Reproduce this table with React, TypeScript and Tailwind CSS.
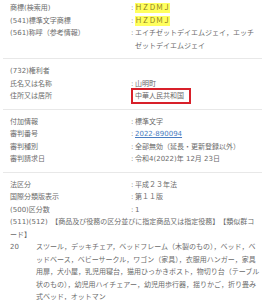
import React from 'react';

type Row = { label: string; value: React.ReactNode };

const Field: React.FC<Row> = ({ label, value }) => (
  <div className="grid grid-cols-[121px_4px_1fr]">
    <span>{label}</span>
    <span>{value !== null ? ':' : ''}</span>
    <span>{value}</span>
  </div>
);

const Mark: React.FC<{ children: React.ReactNode }> = ({ children }) => (
  <span className="bg-[#ffff5e] text-[#8a7a1e] py-[1px]">{children}</span>
);

const App: React.FC = () => {
  return (
    <div className="w-[265px] h-[300px] overflow-hidden bg-white px-[3px] pt-[2px] text-[7px] leading-[12.5px] text-[#6b6b6b] font-['DejaVu_Sans','Noto_Sans_CJK_JP',sans-serif]">
      {/* 商標 */}
      <div className="pl-[7px] pr-[2px] pb-[6px]">
        <Field label="商標(検索用)" value={<Mark>ＨＺＤＭＪ</Mark>} />
        <Field label="(541)標準文字商標" value={<Mark>ＨＺＤＭＪ</Mark>} />
        <Field label="(561)称呼（参考情報）" value="エイチゼットデイエムジェイ，エッチゼットデイエムジェイ" />
      </div>

      {/* 権利者 */}
      <div className="border-t border-[#e8e8e8] pl-[7px] pr-[2px] py-[6px]">
        <Field label="(732)権利者" value={null} />
        <Field label="氏名又は名称" value="山明町" />
        <div className="relative">
          <Field label="住所又は居所" value="中華人民共和国" />
          <div className="absolute left-[121px] top-[-2px] w-[60px] h-[16px] border-2 border-[#d8202a]" />
        </div>
      </div>

      {/* 審判 */}
      <div className="border-t border-[#e8e8e8] pl-[7px] pr-[2px] py-[6px]">
        <Field label="付加情報" value="標準文字" />
        <Field
          label="審判番号"
          value={<span className="text-[#4a7cc0] underline">2022-890094</span>}
        />
        <Field label="審判種別" value="全部無効（延長・更新登録以外）" />
        <Field label="審判請求日" value="令和4(2022)年 12月 23日" />
      </div>

      {/* 区分 */}
      <div className="border-t border-[#e8e8e8] pl-[7px] pr-[2px] pt-[6px]">
        <Field label="法区分" value="平成２３年法" />
        <Field label="国際分類版表示" value="第１１版" />
        <Field label="(500)区分数" value="1" />
        <p>(511)(512)　【商品及び役務の区分並びに指定商品又は指定役務】　【類似群コード】</p>
        <div className="grid grid-cols-[26px_1fr]">
          <span>20</span>
          <span>
            スツール，デッキチェア，ベッドフレーム（木製のもの），ベッド，ベッドベース，ベビーサークル，ワゴン（家具），衣服用ハンガー，家具用扉，犬小屋，乳児用寝台，猫用ひっかきポスト，物切り台（テーブル状のもの），幼児用ハイチェアー，幼児用歩行器，揺りかご，折り畳み式ベッド，オットマン
          </span>
        </div>
      </div>
    </div>
  );
};

export default App;
